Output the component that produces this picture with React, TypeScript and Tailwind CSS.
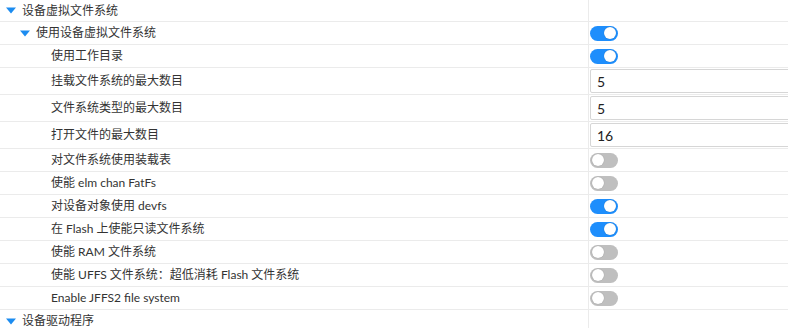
import React from "react";

type Item =
  | { kind: "group"; label: string; level: 0 | 1; toggle?: boolean }
  | { kind: "toggle"; label: string; on: boolean }
  | { kind: "number"; label: string; value: string };

const items: Item[] = [
  { kind: "group", label: "设备虚拟文件系统", level: 0 },
  { kind: "group", label: "使用设备虚拟文件系统", level: 1, toggle: true },
  { kind: "toggle", label: "使用工作目录", on: true },
  { kind: "number", label: "挂载文件系统的最大数目", value: "5" },
  { kind: "number", label: "文件系统类型的最大数目", value: "5" },
  { kind: "number", label: "打开文件的最大数目", value: "16" },
  { kind: "toggle", label: "对文件系统使用装载表", on: false },
  { kind: "toggle", label: "使能 elm chan FatFs", on: false },
  { kind: "toggle", label: "对设备对象使用 devfs", on: true },
  { kind: "toggle", label: "在 Flash 上使能只读文件系统", on: true },
  { kind: "toggle", label: "使能 RAM 文件系统", on: false },
  { kind: "toggle", label: "使能 UFFS 文件系统：超低消耗 Flash 文件系统", on: false },
  { kind: "toggle", label: "Enable JFFS2 file system", on: false },
  { kind: "group", label: "设备驱动程序", level: 0 },
];

function Caret() {
  return (
    <svg width="10" height="7" viewBox="0 0 10 7" className="shrink-0">
      <path d="M0 0.5 L10 0.5 L5 6.5 Z" fill="#1c8cf0" />
    </svg>
  );
}

function Switch({ on }: { on: boolean }) {
  return (
    <div
      className={`relative h-[15px] w-[28px] rounded-full ${on ? "bg-[#1e8efc]" : "bg-[#bfbfbf]"}`}
    >
      <div
        className={`absolute top-[1.5px] h-[12px] w-[12px] rounded-full bg-white shadow-[0_0_1px_rgba(0,0,0,0.3)] ${on ? "right-[2px]" : "left-[2px]"}`}
      />
    </div>
  );
}

export default function App() {
  return (
    <div
      className="w-[788px] h-[328px] overflow-hidden bg-white text-[12px] text-[#333]"
      style={{ fontFamily: 'Lato, "Noto Sans CJK SC", sans-serif' }}
    >
      {items.map((item, i) => {
        const tall = item.kind === "number";
        const first = i === 0;
        const height = tall ? "h-[26px]" : first ? "h-[21px]" : "h-[22px]";
        return (
          <div key={i} className={`flex ${height} border-b border-[#ebebeb] box-content`}>
            <div className="flex w-[589px] shrink-0 items-center border-r border-[#ebebeb]">
              {item.kind === "group" ? (
                <div className={`flex items-center gap-[6px] ${item.level === 0 ? "pl-[6px]" : "pl-[20px]"}`}>
                  <Caret />
                  <span className="leading-none">{item.label}</span>
                </div>
              ) : (
                <span className="pl-[51px] leading-none">{item.label}</span>
              )}
            </div>
            <div className="flex flex-1 items-center overflow-hidden pl-[1px]">
              {item.kind === "group" && item.toggle && <Switch on />}
              {item.kind === "toggle" && <Switch on={item.on} />}
              {item.kind === "number" && (
                <div className="flex h-[24px] w-[240px] shrink-0 items-center rounded-[2px] border border-[#d6d6d6] pl-[6px] text-[14px] text-[#222]">
                  {item.value}
                </div>
              )}
            </div>
          </div>
        );
      })}
    </div>
  );
}
